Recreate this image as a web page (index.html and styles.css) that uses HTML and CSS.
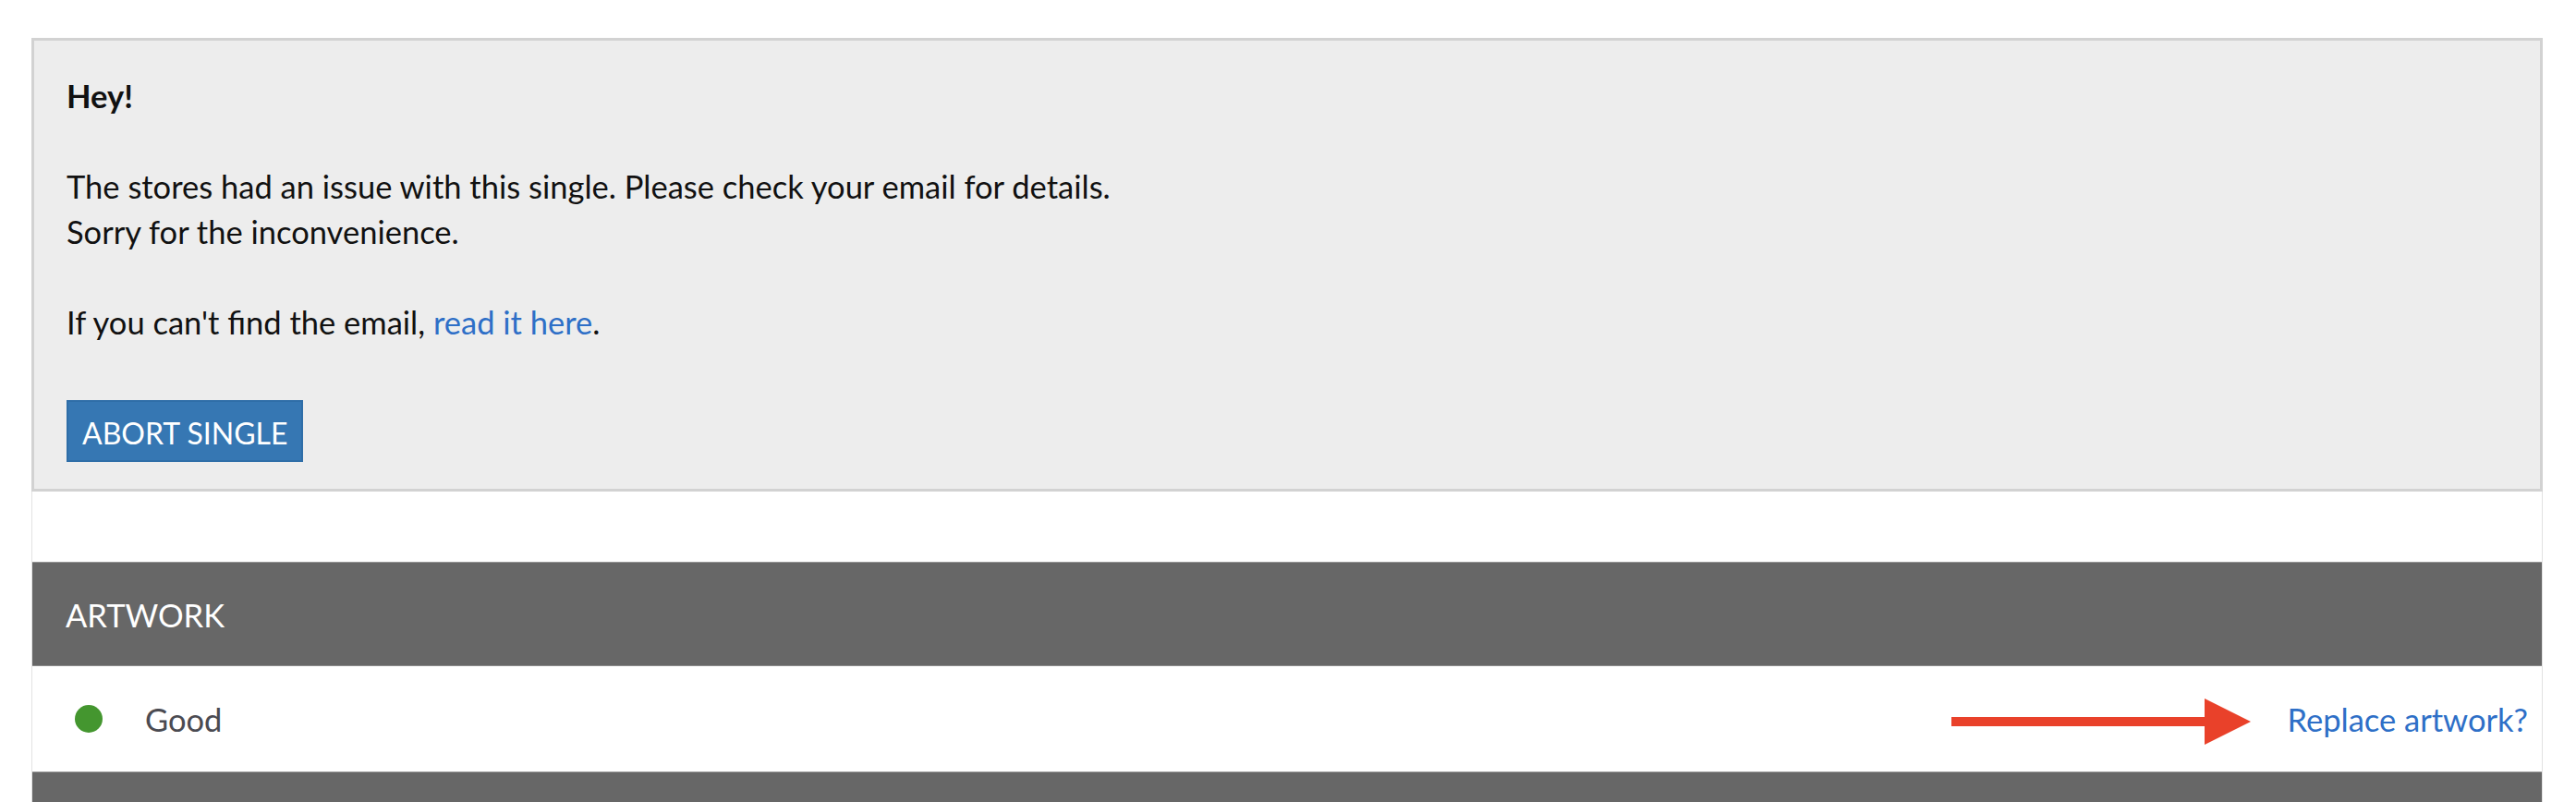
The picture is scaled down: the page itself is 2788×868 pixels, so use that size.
FILE: index.html
```html
<!DOCTYPE html>
<html lang="en">
<head>
<meta charset="utf-8">
<title>Single status</title>
<link rel="stylesheet" href="styles.css">
</head>
<body>
<div class="page">
  <div class="notice">
    <p class="notice-title">Hey!</p>
    <p class="notice-text">The stores had an issue with this single. Please check your email for details.<br>Sorry for the inconvenience.</p>
    <p class="notice-text last">If you can't find the email, <a class="link" href="#">read it here</a>.</p>
    <button class="btn-abort" type="button">ABORT SINGLE</button>
  </div>

  <section class="panel">
    <h2 class="panel-head">ARTWORK</h2>
    <div class="status-row">
      <div class="status">
        <span class="dot"></span>
        <span class="status-label">Good</span>
      </div>
      <div class="replace">
        <svg class="arrow" width="324" height="50" viewBox="0 0 324 50" aria-hidden="true">
          <rect x="0" y="20" width="276" height="10" fill="#e9412a"/>
          <polygon points="274,0 324,25 274,50" fill="#e9412a"/>
        </svg>
        <a class="link replace-link" href="#">Replace artwork?</a>
      </div>
    </div>
    <h2 class="panel-head"></h2>
  </section>
</div>
</body>
</html>
```

FILE: styles.css
```css
html, body {
  margin: 0;
  padding: 0;
  overflow: hidden;
  background: #ffffff;
}

body {
  font-family: "Lato", "Liberation Sans", sans-serif;
  font-size: 34.5px;
  line-height: 49px;
  color: #111111;
}

.page {
  margin: 41px 36px 0 34px;
}

.notice {
  background: #ededed;
  border: 3px solid #d2d2d2;
  padding: 35px 35px 29px 35px;
}

.notice-title {
  margin: 0 0 49px 0;
  font-weight: 700;
}

.notice-text {
  margin: 0 0 49px 0;
}

.notice-text.last {
  margin-bottom: 0;
}

.link {
  color: #2e6fc7;
  text-decoration: none;
}

.btn-abort {
  display: block;
  margin-top: 60px;
  box-sizing: border-box;
  height: 67px;
  padding: 4px 15px 0 15px;
  line-height: 59px;
  font-family: "Lato", "Liberation Sans", sans-serif;
  font-size: 32px;
  font-weight: 400;
  color: #ffffff;
  background: #3677b3;
  border: 2px solid #2f6ea8;
  border-radius: 0;
  cursor: pointer;
}

.panel {
  border: 1px solid #e2e2e2;
  border-top: 0;
  padding-top: 76px;
}

.panel-head {
  box-sizing: border-box;
  height: 113px;
  margin: 0;
  padding: 2px 36px 0 36px;
  line-height: 109px;
  font-size: 34.5px;
  font-weight: 400;
  color: #ffffff;
  background: #676767;
  border-top: 1px solid #969696;
  border-bottom: 1px solid #8a8a8a;
}

.status-row {
  display: flex;
  align-items: center;
  justify-content: space-between;
  height: 114px;
  padding: 0 15px 0 46px;
}

.status {
  display: flex;
  align-items: center;
}

.dot {
  width: 30px;
  height: 30px;
  border-radius: 50%;
  background: #44962f;
  margin-right: 46px;
}

.status-label {
  color: #4b4b52;
}

.replace {
  display: flex;
  align-items: center;
}

.arrow {
  display: block;
  margin-top: 6px;
  margin-right: 39px;
}
```
